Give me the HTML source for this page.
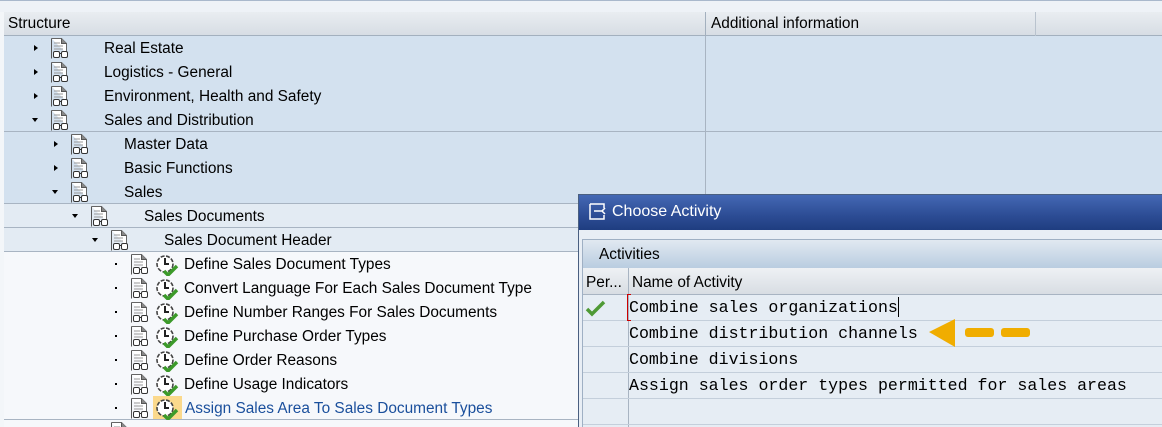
<!DOCTYPE html>
<html style="width:1162px;height:427px;overflow:hidden"><head><meta charset="utf-8"><style>
*{margin:0;padding:0;box-sizing:border-box}
body{width:1162px;height:427px;overflow:hidden;background:#f3f6f9;font-family:"Liberation Sans",sans-serif;font-size:15.4px;color:#000;position:relative}
.abs{position:absolute}
.row{position:absolute;left:4px;width:1158px;height:24px;overflow:hidden}
.t{position:absolute;top:4px;white-space:nowrap}
.ic{position:absolute;top:2px}
.arr{position:absolute;top:9px;width:0;height:0}
.r{border-left:4px solid #000;border-top:3px solid transparent;border-bottom:3px solid transparent}
.d{border-top:4px solid #000;border-left:3px solid transparent;border-right:3px solid transparent;top:10px}
.dot{position:absolute;top:11px;width:2px;height:2px;background:#000}
.mono{font-family:"Liberation Mono",monospace;font-size:16.6px;position:absolute;white-space:nowrap}
</style></head><body>
<div class="abs" style="left:0;top:0;width:1162px;height:1px;background:#a9b8cc"></div>
<div class="abs" style="left:0;top:1px;width:1162px;height:11px;background:#eef2f7"></div>
<div class="abs" style="left:4px;top:12px;width:1158px;height:24px;background:linear-gradient(#e9edf1,#d7dde4);border-bottom:1px solid #a3b0be"></div>
<div class="abs" style="left:705px;top:12px;width:1px;height:24px;background:#a3b0be"></div>
<div class="abs" style="left:1035px;top:12px;width:1px;height:24px;background:#b9c3ce"></div>
<div class="t" style="left:8px;top:15px">Structure</div>
<div class="t" style="left:711px;top:15px">Additional information</div>
<div class="abs" style="left:4px;top:36px;width:1158px;height:168px;background:#d3e1ef"></div>
<div class="abs" style="left:4px;top:204px;width:1158px;height:48px;background:#e3ebf3"></div>
<div class="abs" style="left:4px;top:252px;width:1158px;height:175px;background:#f6f8fb"></div>
<div class="abs" style="left:705px;top:36px;width:1px;height:168px;background:#a8b4c2"></div>
<div class="abs" style="left:4px;top:131px;width:1158px;height:1px;background:#a8b4c2"></div>
<div class="abs" style="left:4px;top:203px;width:1158px;height:1px;background:#a8b4c2"></div>
<div class="abs" style="left:4px;top:227px;width:1158px;height:1px;background:#a8b4c2"></div>
<div class="abs" style="left:4px;top:251px;width:1158px;height:1px;background:#a8b4c2"></div>
<div class="abs" style="left:4px;top:419px;width:1158px;height:1px;background:#a8b4c2"></div>

<svg width="0" height="0" style="position:absolute"><defs>
<g id="doc"><path d="M1.5 .5h10l5 5v10" fill="#fff" stroke="#666"/><path d="M11.5 .5v5h5" fill="#888" stroke="#555"/><path d="M4 5h6M4 8h9M4 11h9" stroke="#999"/><path d="M1.5 .5v20" stroke="#555"/><rect x="3.5" y="13.5" width="6" height="6" rx="1.5" fill="#fff" stroke="#333"/><rect x="11.5" y="13.5" width="6" height="6" rx="1.5" fill="#fff" stroke="#333"/><path d="M9.5 15.5h2" stroke="#333"/></g>
<g id="clk"><circle cx="10" cy="10" r="8" fill="#fff" stroke="#444" stroke-width="1.6" stroke-dasharray="4 1.5"/><path d="M10 4v6h4" stroke="#222" stroke-width="2" fill="none"/><path d="M9 17l4 4 9-9" stroke="#3c9a2a" stroke-width="3.5" fill="none"/></g>
</defs></svg>

<div class="row" style="top:36px"><div class="arr r" style="left:30px"></div><svg class="ic" style="left:46px" width="20" height="22"><use href="#doc"/></svg><div class="t" style="left:100px">Real Estate</div></div>
<div class="row" style="top:60px"><div class="arr r" style="left:30px"></div><svg class="ic" style="left:46px" width="20" height="22"><use href="#doc"/></svg><div class="t" style="left:100px">Logistics - General</div></div>
<div class="row" style="top:84px"><div class="arr r" style="left:30px"></div><svg class="ic" style="left:46px" width="20" height="22"><use href="#doc"/></svg><div class="t" style="left:100px">Environment, Health and Safety</div></div>
<div class="row" style="top:108px"><div class="arr d" style="left:28px"></div><svg class="ic" style="left:46px" width="20" height="22"><use href="#doc"/></svg><div class="t" style="left:100px">Sales and Distribution</div></div>
<div class="row" style="top:132px"><div class="arr r" style="left:50px"></div><svg class="ic" style="left:66px" width="20" height="22"><use href="#doc"/></svg><div class="t" style="left:120px">Master Data</div></div>
<div class="row" style="top:156px"><div class="arr r" style="left:50px"></div><svg class="ic" style="left:66px" width="20" height="22"><use href="#doc"/></svg><div class="t" style="left:120px">Basic Functions</div></div>
<div class="row" style="top:180px"><div class="arr d" style="left:48px"></div><svg class="ic" style="left:66px" width="20" height="22"><use href="#doc"/></svg><div class="t" style="left:120px">Sales</div></div>
<div class="row" style="top:204px"><div class="arr d" style="left:68px"></div><svg class="ic" style="left:86px" width="20" height="22"><use href="#doc"/></svg><div class="t" style="left:140px">Sales Documents</div></div>
<div class="row" style="top:228px"><div class="arr d" style="left:88px"></div><svg class="ic" style="left:106px" width="20" height="22"><use href="#doc"/></svg><div class="t" style="left:160px">Sales Document Header</div></div>
<div class="row" style="top:252px"><div class="dot" style="left:111px"></div><svg class="ic" style="left:126px" width="20" height="22"><use href="#doc"/></svg><svg class="ic" style="left:151px" width="24" height="22"><use href="#clk"/></svg><div class="t" style="left:180px">Define Sales Document Types</div></div>
<div class="row" style="top:276px"><div class="dot" style="left:111px"></div><svg class="ic" style="left:126px" width="20" height="22"><use href="#doc"/></svg><svg class="ic" style="left:151px" width="24" height="22"><use href="#clk"/></svg><div class="t" style="left:180px">Convert Language For Each Sales Document Type</div></div>
<div class="row" style="top:300px"><div class="dot" style="left:111px"></div><svg class="ic" style="left:126px" width="20" height="22"><use href="#doc"/></svg><svg class="ic" style="left:151px" width="24" height="22"><use href="#clk"/></svg><div class="t" style="left:180px">Define Number Ranges For Sales Documents</div></div>
<div class="row" style="top:324px"><div class="dot" style="left:111px"></div><svg class="ic" style="left:126px" width="20" height="22"><use href="#doc"/></svg><svg class="ic" style="left:151px" width="24" height="22"><use href="#clk"/></svg><div class="t" style="left:180px">Define Purchase Order Types</div></div>
<div class="row" style="top:348px"><div class="dot" style="left:111px"></div><svg class="ic" style="left:126px" width="20" height="22"><use href="#doc"/></svg><svg class="ic" style="left:151px" width="24" height="22"><use href="#clk"/></svg><div class="t" style="left:180px">Define Order Reasons</div></div>
<div class="row" style="top:372px"><div class="dot" style="left:111px"></div><svg class="ic" style="left:126px" width="20" height="22"><use href="#doc"/></svg><svg class="ic" style="left:151px" width="24" height="22"><use href="#clk"/></svg><div class="t" style="left:180px">Define Usage Indicators</div></div>
<div class="row" style="top:396px"><div class="dot" style="left:111px"></div><svg class="ic" style="left:126px" width="20" height="22"><use href="#doc"/></svg><div class="abs" style="left:149px;top:0;width:29px;height:23px;background:#fbd98c"></div><svg class="ic" style="left:151px" width="24" height="22"><use href="#clk"/></svg><div class="t" style="left:181px;color:#1a4f9c">Assign Sales Area To Sales Document Types</div></div>
<div class="row" style="top:420px;height:7px"><svg class="ic" style="left:106px" width="20" height="22"><use href="#doc"/></svg></div>

<div class="abs" style="left:578px;top:194px;width:584px;height:233px;background:#e8eef5;border-left:1px solid #4a5f80;border-top:1px solid #4a5f80"></div>
<div class="abs" style="left:579px;top:195px;width:583px;height:35px;background:linear-gradient(#4468b4,#2c4c94 60%,#1f3d80)"></div>
<svg class="abs" style="left:589px;top:203px" width="20" height="18"><path d="M1 1h14v4M1 1v15h14v-4" fill="none" stroke="#fff" stroke-width="1.5"/><path d="M5 8h8l3-3M13 8l3 3" fill="none" stroke="#fff" stroke-width="1.5"/></svg>
<div class="t" style="left:612px;top:203px;color:#fff;font-size:16px">Choose Activity</div>
<div class="abs" style="left:582px;top:239px;width:580px;height:188px;background:#e6edf4;border-left:1px solid #9fb0c4;border-top:1px solid #9fb0c4"></div>
<div class="abs" style="left:583px;top:240px;width:579px;height:28px;background:linear-gradient(#e1e9f1,#b9cde0)"></div>
<div class="t" style="left:599px;top:246px">Activities</div>
<div class="abs" style="left:583px;top:268px;width:579px;height:27px;background:linear-gradient(#eef1f4,#d8dde3);border-bottom:1px solid #a8b4c2"></div>
<div class="abs" style="left:628px;top:268px;width:1px;height:159px;background:#a8b4c2"></div>
<div class="t" style="left:586px;top:274px">Per...</div>
<div class="t" style="left:632px;top:274px">Name of Activity</div>
<div class="abs" style="left:583px;top:320px;width:579px;height:1px;background:#c4cfdb"></div>
<div class="abs" style="left:583px;top:346px;width:579px;height:1px;background:#c4cfdb"></div>
<div class="abs" style="left:583px;top:372px;width:579px;height:1px;background:#c4cfdb"></div>
<div class="abs" style="left:583px;top:398px;width:579px;height:1px;background:#c4cfdb"></div>
<div class="abs" style="left:583px;top:424px;width:579px;height:1px;background:#c4cfdb"></div>
<svg class="abs" style="left:585px;top:299px" width="22" height="18"><path d="M2 10l5 5 12-12" fill="none" stroke="#4f9a35" stroke-width="3.5"/></svg>
<div class="abs" style="left:627px;top:294px;width:4px;height:1px;background:#c00"></div>
<div class="abs" style="left:627px;top:294px;width:1px;height:26px;background:#c00"></div>
<div class="abs" style="left:627px;top:320px;width:4px;height:1px;background:#c00"></div>
<div class="mono" style="left:629px;top:298px">Combine sales organizations</div>
<div class="abs" style="left:898px;top:297px;width:1px;height:20px;background:#000"></div>
<div class="mono" style="left:629px;top:324px">Combine distribution channels</div>
<div class="mono" style="left:629px;top:350px">Combine divisions</div>
<div class="mono" style="left:629px;top:376px">Assign sales order types permitted for sales areas</div>
<svg class="abs" style="left:926px;top:316px" width="116" height="36"><path d="M3 16l26-13v28z" fill="#f0ad00"/><rect x="39" y="12" width="29" height="9" rx="3" fill="#f0ad00"/><rect x="75" y="12" width="29" height="9" rx="3" fill="#f0ad00"/></svg>
</body></html>
